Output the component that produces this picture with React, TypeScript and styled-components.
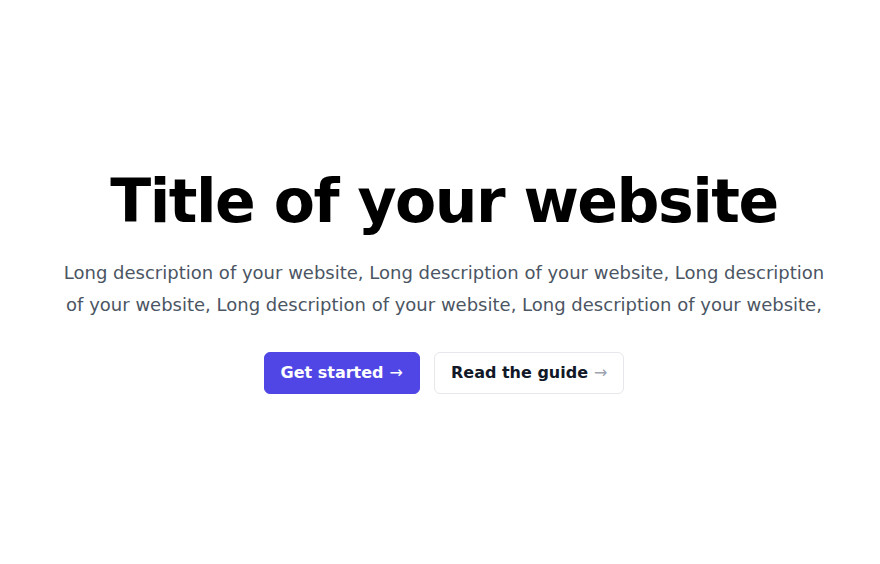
import React from "react"
import styled, { createGlobalStyle } from "styled-components"

const GlobalStyle = createGlobalStyle`
  html, body {
    margin: 0;
    padding: 0;
    background: #ffffff;
    font-family: "DejaVu Sans", sans-serif;
  }
`

const Page = styled.main`
  min-height: 564px;
  display: flex;
  align-items: center;
  justify-content: center;
  padding: 0 16px 0 24px;
  box-sizing: border-box;
`

const Hero = styled.section`
  max-width: 768px;
  display: flex;
  flex-direction: column;
  align-items: center;
  text-align: center;
`

const Title = styled.h1`
  margin: 0;
  font-size: 60px;
  line-height: 60px;
  font-weight: 700;
  letter-spacing: -0.025em;
  color: #000000;
`

const Description = styled.p`
  margin: 26px 0 0;
  font-size: 18px;
  line-height: 32px;
  color: #4b5563;
`

const Actions = styled.div`
  margin-top: 31px;
  display: flex;
  align-items: center;
  gap: 14px;
`

const Button = styled.a<{ $primary?: boolean }>`
  display: inline-flex;
  align-items: center;
  gap: 6px;
  height: 42px;
  box-sizing: border-box;
  padding: 0 16px;
  border-radius: 6px;
  font-size: 16px;
  font-weight: 700;
  text-decoration: none;
  cursor: pointer;
  color: ${p => (p.$primary ? "#ffffff" : "#111827")};
  background: ${p => (p.$primary ? "#4f46e5" : "#ffffff")};
  border: 1px solid ${p => (p.$primary ? "#4f46e5" : "#e5e7eb")};
`

const Arrow = styled.span<{ $muted?: boolean }>`
  font-weight: 400;
  color: ${p => (p.$muted ? "#9ca3af" : "inherit")};
`

export default function App() {
  return <>
    <GlobalStyle/>
    <Page>
      <Hero>
        <Title>Title of your website</Title>
        <Description>
          Long description of your website, Long description of your website, Long description of your website, Long description of your website, Long description of your website,
        </Description>
        <Actions>
          <Button $primary href="#">Get started <Arrow>→</Arrow></Button>
          <Button href="#">Read the guide <Arrow $muted>→</Arrow></Button>
        </Actions>
      </Hero>
    </Page>
  </>
}
